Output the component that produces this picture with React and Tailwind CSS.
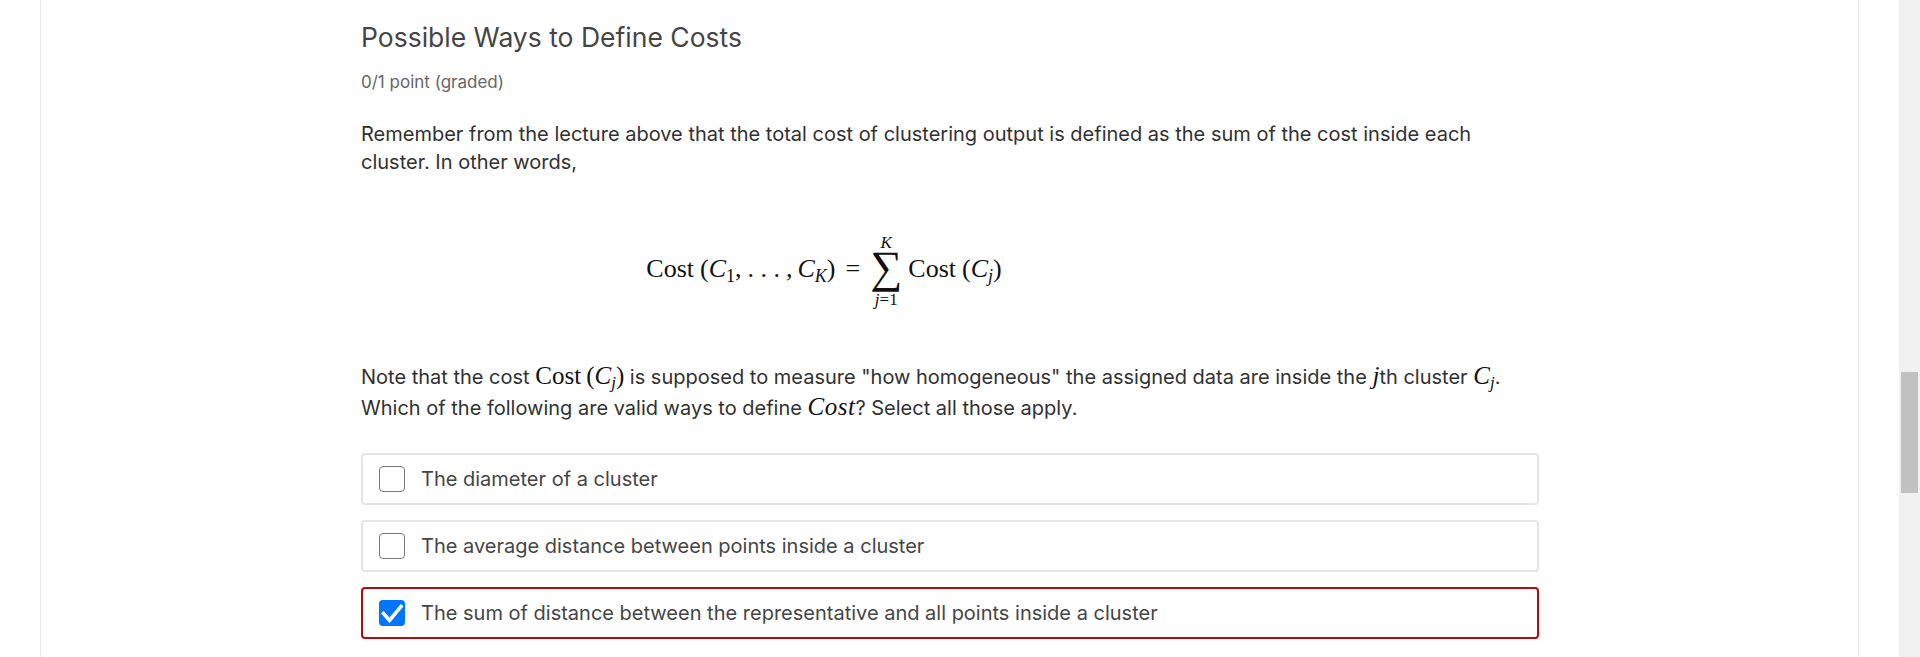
import React from 'react';

const mathFont = "font-['Liberation_Serif','DejaVu_Serif',serif]";

const CheckBox = ({ checked }) =>
  checked ? (
    <div className="w-[26px] h-[26px] rounded-[4px] bg-[#0075ff] flex items-center justify-center shrink-0">
      <svg width="26" height="26" viewBox="0 0 26 26">
        <polyline points="4.5,13.5 10.5,20.5 22,6.5" fill="none" stroke="#fff" strokeWidth="3.6" strokeLinecap="square" />
      </svg>
    </div>
  ) : (
    <div className="w-[26px] h-[26px] rounded-[4px] border-[1.5px] border-[#7a7a7a] bg-white shrink-0" />
  );

const Option = ({ label, checked, wrong }) => (
  <label
    className={
      'flex items-center gap-4 h-[52px] px-4 rounded-[4px] border-2 ' +
      (wrong ? 'border-[#b20c0c]' : 'border-[#e4e4e4]')
    }
  >
    <CheckBox checked={checked} />
    <span className="text-[20px] text-[#454545]">{label}</span>
  </label>
);

const App = () => {
  return (
    <div className="flex h-[657px] w-full overflow-hidden bg-white font-['Inter','Liberation_Sans',sans-serif]">
      <div className="w-[40px] shrink-0" />
      <div className="w-[1819px] shrink-0 border-x border-[#e8e8e8] pl-[320px] pt-[21px]">
        <div className="w-[1178px]">
          <h2 className="text-[26.5px] leading-[32px] text-[#454545] font-normal">
            Possible Ways to Define Costs
          </h2>
          <div className="mt-[17px] text-[17px] leading-[24px] text-[#666]">0/1 point (graded)</div>

          <p className="mt-[26px] text-[20px] leading-[28px] text-[#313131]">
            Remember from the lecture above that the total cost of clustering output is defined as the sum of the cost inside each
            <br />
            cluster. In other words,
          </p>

          <div className={'flex items-center justify-center w-[926px] h-[71px] mt-[60px] text-[26px] text-[#111] ' + mathFont}>
            <span className="whitespace-nowrap -translate-y-[3px]">
              Cost<span className="ml-[6px]">(</span>
              <span className="italic">C</span>
              <sub className="text-[18px]">1</sub>,<span className="mx-[6px]">. . .</span>,<span className="ml-[5px] italic">C</span>
              <sub className="text-[18px] italic">K</sub>)<span className="mx-[10px]">=</span>
            </span>
            <div className="flex flex-col items-center">
              <span className="block italic text-[17px] leading-[14px]">K</span>
              <span className="block text-[45px] leading-[26px] h-[36px] mt-[4px]">∑</span>
              <span className="block text-[17px] leading-[14px] mt-[3px]">
                <span className="italic">j</span>=1
              </span>
            </div>
            <span className="whitespace-nowrap ml-[6px] -translate-y-[3px]">
              Cost<span className="ml-[6px]">(</span>
              <span className="italic">C</span>
              <sub className="text-[18px] italic">j</sub>)
            </span>
          </div>

          <p className="mt-[54px] text-[20px] leading-[29px] text-[#313131]">
            Note that the cost{' '}
            <span className={'text-[25px] text-[#111] ' + mathFont}>
              Cost<span className="ml-[5px]">(</span>
              <span className="italic">C</span>
              <sub className="text-[17px] italic">j</sub>)
            </span>{' '}
            is supposed to measure "how homogeneous" the assigned data are inside the{' '}
            <span className={'italic text-[25px] text-[#111] ' + mathFont}>j</span>th cluster{' '}
            <span className={'text-[25px] text-[#111] ' + mathFont}>
              <span className="italic">C</span>
              <sub className="text-[17px] italic">j</sub>
            </span>
            .
            <br />
            Which of the following are valid ways to define{' '}
            <span className={'italic text-[25px] tracking-[0.5px] text-[#111] ' + mathFont}>Cost</span>? Select all those apply.
          </p>

          <div className="mt-[30px] flex flex-col gap-[15px]">
            <Option label="The diameter of a cluster" />
            <Option label="The average distance between points inside a cluster" />
            <Option label="The sum of distance between the representative and all points inside a cluster" checked wrong />
          </div>
        </div>
      </div>
      <div className="flex-1" />
      <div className="w-[21px] shrink-0 bg-[#f1f1f1] pt-[372px] px-[2px]">
        <div className="h-[121px] bg-[#c1c1c1]" />
      </div>
    </div>
  );
};

export default App;
